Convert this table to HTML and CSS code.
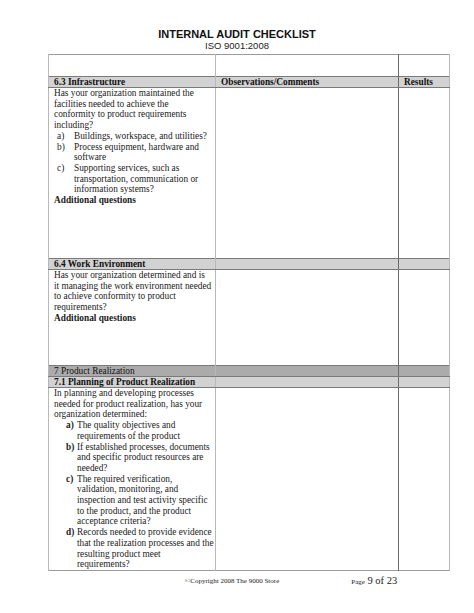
FILE: index.html
```html
<!DOCTYPE html>
<html>
<head>
<meta charset="utf-8">
<link rel="stylesheet" href="styles.css">
</head>
<body>
<div class="page">
  <header class="doc-head">
    <h1 class="title">INTERNAL AUDIT CHECKLIST</h1>
    <div class="subtitle">ISO 9001:2008</div>
  </header>
  <table class="checklist">
    <colgroup>
      <col class="c1"><col class="c2"><col class="c3">
    </colgroup>
    <tr class="blank"><td></td><td class="mid"></td><td></td></tr>
    <tr class="band"><th>6.3 Infrastructure</th><th class="mid">Observations/Comments</th><th>Results</th></tr>
    <tr class="body b63">
      <td>Has your organization maintained the facilities needed to achieve the conformity to product requirements including?
        <ol class="alpha">
          <li><span class="mk">a)</span><span>Buildings, workspace, and utilities?</span></li>
          <li><span class="mk">b)</span><span>Process equipment, hardware and software</span></li>
          <li><span class="mk">c)</span><span>Supporting services, such as transportation, communication or information systems?</span></li>
        </ol>
        <div class="addq">Additional questions</div>
      </td>
      <td class="mid"></td><td></td>
    </tr>
    <tr class="band"><th>6.4 Work Environment</th><th class="mid"></th><th></th></tr>
    <tr class="body b64">
      <td>Has your organization determined and is it managing the work environment needed to achieve conformity to product requirements?
        <div class="addq">Additional questions</div>
      </td>
      <td class="mid"></td><td></td>
    </tr>
    <tr class="band dark"><td>7 Product Realization</td><td class="mid"></td><td></td></tr>
    <tr class="band"><th>7.1 Planning of Product Realization</th><th class="mid"></th><th></th></tr>
    <tr class="body b71">
      <td>In planning and developing processes needed for product realization, has your organization determined:
        <ol class="alpha bold-mk">
          <li><span class="mk">a)</span><span>The quality objectives and requirements of the product</span></li>
          <li><span class="mk">b)</span><span>If established processes, documents and specific product resources are needed?</span></li>
          <li><span class="mk">c)</span><span>The required verification, validation, monitoring, and inspection and test activity specific to the product, and the product acceptance criteria?</span></li>
          <li class="wide"><span class="mk">d)</span><span>Records needed to provide evidence that the realization processes and the resulting product meet requirements?</span></li>
        </ol>
      </td>
      <td class="mid"></td><td></td>
    </tr>
  </table>
  <footer class="doc-foot">
    <span class="copy">©Copyright 2008 The 9000 Store</span>
    <span class="pg"><span class="pg-s">Page</span> 9 of 23</span>
  </footer>
</div>
</body>
</html>
```

FILE: styles.css
```css
html, body {
  margin: 0;
  padding: 0;
  background: #fff;
}
.page {
  width: 474px;
  height: 613px;
  padding-top: 28px;
  box-sizing: border-box;
  color: #1a1a1a;
}
.doc-head {
  text-align: center;
  font-family: "Liberation Sans", Arial, sans-serif;
}
.title {
  margin: 0;
  font-size: 11px;
  line-height: 12px;
  font-weight: bold;
  color: #111;
}
.subtitle {
  font-size: 9.5px;
  line-height: 11px;
  color: #222;
}
.checklist {
  margin: 3px 0 0 48px;
  width: 401px;
  border-collapse: collapse;
  table-layout: fixed;
  font-family: "Liberation Serif", "Times New Roman", serif;
  font-size: 9.3px;
  line-height: 10.7px;
  border: 1px solid #9a9a9a;
}
.c1 { width: 167px; }
.c2 { width: 183px; }
.c3 { width: 51px; }
.checklist td, .checklist th {
  padding: 0 3px 0 5px;
  vertical-align: top;
  text-align: left;
  border-left: 1px solid #b8b8b8;
  border-right: 1px solid #b8b8b8;
}
.checklist td.mid, .checklist th.mid {
  border-right: 1px solid #6a6a6a;
}
.blank td { height: 21px; }
.band th, .band td {
  background: #d2d2d2;
  border-top: 1px solid #7a7a7a;
  border-bottom: 1px solid #7a7a7a;
  height: 10px;
  line-height: 10px;
  font-weight: bold;
  color: #111;
}
.band.dark td {
  background: #ababab;
  font-weight: normal;
}
.b63 td { height: 170px; }
.b64 td { height: 95px; }
.b71 td { height: 179px; }
.alpha {
  list-style: none;
  margin: 0;
  padding: 0;
}
.alpha li {
  display: flex;
}
.alpha .mk {
  flex: none;
  width: 20px;
  padding-left: 3px;
  box-sizing: border-box;
}
.bold-mk { margin-right: -1.5px; }
.bold-mk li { padding-left: 9px; }
.bold-mk li.wide { margin-right: -1.5px; }
.bold-mk .mk { font-weight: bold; width: 14px; }
.addq { font-weight: bold; }
.doc-foot {
  display: flex;
  font-family: "Liberation Serif", "Times New Roman", serif;
  margin-top: 4px;
  color: #222;
}
.copy {
  font-size: 7px;
  margin-left: 185px;
  line-height: 12px;
}
.pg {
  font-size: 10.5px;
  margin-left: 72px;
  line-height: 12px;
}
.pg-s { font-size: 7px; }
```
